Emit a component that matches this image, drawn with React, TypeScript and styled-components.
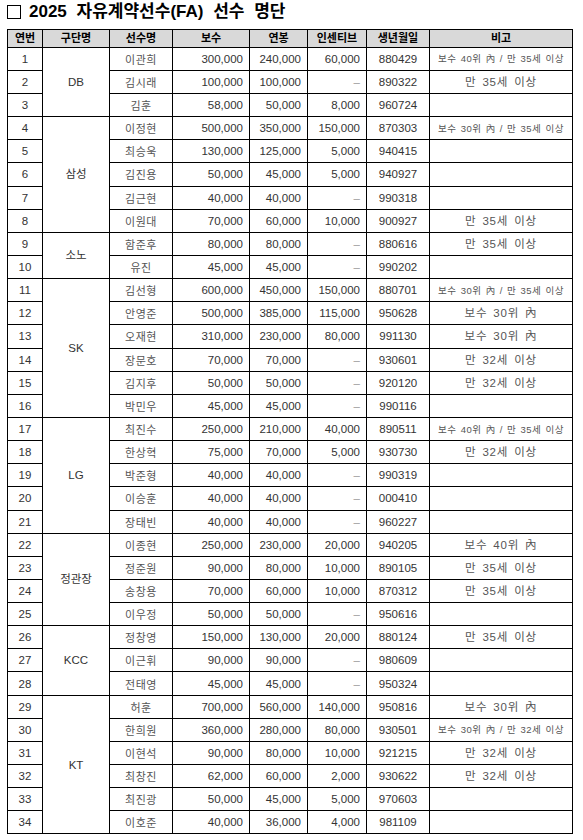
import styled, { createGlobalStyle } from 'styled-components';

const GlobalStyle = createGlobalStyle`
  body {
    margin: 0;
    background: #fff;
    font-family: 'Liberation Sans', 'Noto Sans CJK KR', sans-serif;
  }
`;

type Player = {
  no: number;
  name: string;
  pay: string;
  salary: string;
  bonus: string;
  birth: string;
  note?: string;
};

type Team = {
  team: string;
  players: Player[];
};

const p = (
  no: number,
  name: string,
  pay: string,
  salary: string,
  bonus: string,
  birth: string,
  note?: string
): Player => ({ no, name, pay, salary, bonus, birth, note });

const teams: Team[] = [
  {
    team: 'DB',
    players: [
      p(1, '이관희', '300,000', '240,000', '60,000', '880429', '보수 40위 內 / 만 35세 이상'),
      p(2, '김시래', '100,000', '100,000', '-', '890322', '만 35세 이상'),
      p(3, '김훈', '58,000', '50,000', '8,000', '960724')
    ]
  },
  {
    team: '삼성',
    players: [
      p(4, '이정현', '500,000', '350,000', '150,000', '870303', '보수 30위 內 / 만 35세 이상'),
      p(5, '최승욱', '130,000', '125,000', '5,000', '940415'),
      p(6, '김진용', '50,000', '45,000', '5,000', '940927'),
      p(7, '김근현', '40,000', '40,000', '-', '990318'),
      p(8, '이원대', '70,000', '60,000', '10,000', '900927', '만 35세 이상')
    ]
  },
  {
    team: '소노',
    players: [
      p(9, '함준후', '80,000', '80,000', '-', '880616', '만 35세 이상'),
      p(10, '유진', '45,000', '45,000', '-', '990202')
    ]
  },
  {
    team: 'SK',
    players: [
      p(11, '김선형', '600,000', '450,000', '150,000', '880701', '보수 30위 內 / 만 35세 이상'),
      p(12, '안영준', '500,000', '385,000', '115,000', '950628', '보수 30위 內'),
      p(13, '오재현', '310,000', '230,000', '80,000', '991130', '보수 30위 內'),
      p(14, '장문호', '70,000', '70,000', '-', '930601', '만 32세 이상'),
      p(15, '김지후', '50,000', '50,000', '-', '920120', '만 32세 이상'),
      p(16, '박민우', '45,000', '45,000', '-', '990116')
    ]
  },
  {
    team: 'LG',
    players: [
      p(17, '최진수', '250,000', '210,000', '40,000', '890511', '보수 40위 內 / 만 35세 이상'),
      p(18, '한상혁', '75,000', '70,000', '5,000', '930730', '만 32세 이상'),
      p(19, '박준형', '40,000', '40,000', '-', '990319'),
      p(20, '이승훈', '40,000', '40,000', '-', '000410'),
      p(21, '장태빈', '40,000', '40,000', '-', '960227')
    ]
  },
  {
    team: '정관장',
    players: [
      p(22, '이종현', '250,000', '230,000', '20,000', '940205', '보수 40위 內'),
      p(23, '정준원', '90,000', '80,000', '10,000', '890105', '만 35세 이상'),
      p(24, '송창용', '70,000', '60,000', '10,000', '870312', '만 35세 이상'),
      p(25, '이우정', '50,000', '50,000', '-', '950616')
    ]
  },
  {
    team: 'KCC',
    players: [
      p(26, '정창영', '150,000', '130,000', '20,000', '880124', '만 35세 이상'),
      p(27, '이근휘', '90,000', '90,000', '-', '980609'),
      p(28, '전태영', '45,000', '45,000', '-', '950324')
    ]
  },
  {
    team: 'KT',
    players: [
      p(29, '허훈', '700,000', '560,000', '140,000', '950816', '보수 30위 內'),
      p(30, '한희원', '360,000', '280,000', '80,000', '930501', '보수 30위 內 / 만 32세 이상'),
      p(31, '이현석', '90,000', '80,000', '10,000', '921215', '만 32세 이상'),
      p(32, '최창진', '62,000', '60,000', '2,000', '930622', '만 32세 이상'),
      p(33, '최진광', '50,000', '45,000', '5,000', '970603'),
      p(34, '이호준', '40,000', '36,000', '4,000', '981109')
    ]
  }
];

const columns = [
  { label: '연번', width: 35 },
  { label: '구단명', width: 67 },
  { label: '선수명', width: 63 },
  { label: '보수', width: 77 },
  { label: '연봉', width: 58 },
  { label: '인센티브', width: 59 },
  { label: '생년월일', width: 63 },
  { label: '비고', width: 143 }
];

const Page = styled.div`
  padding: 0 11px 0 7px;
`;

const Title = styled.h1`
  margin: 0;
  height: 29px;
  display: flex;
  align-items: flex-start;
  gap: 8px;
  padding-top: 1px;
  box-sizing: border-box;
  font-size: 17px;
  line-height: 22px;
  font-weight: 700;
  color: #000;
  word-spacing: 5px;
`;

const Box = styled.span`
  display: inline-block;
  width: 14px;
  height: 14px;
  border: 1.5px solid #000;
  margin-top: 4px;
  box-sizing: border-box;
`;

const Table = styled.table`
  width: 565px;
  border-collapse: collapse;
  table-layout: fixed;
  border: 1.5px solid #000;
`;

const HeadCell = styled.th`
  height: 16.7px;
  padding: 0;
  background: #d9d9d9;
  border: 1px solid #000;
  font-size: 11px;
  font-weight: 700;
  color: #000;
  text-align: center;
  line-height: 14px;
`;

const Row = styled.tr`
  height: 23.15px;
`;

const Cell = styled.td<{ $align?: 'left' | 'center' | 'right' }>`
  padding: 0 6px;
  border: 1px solid #000;
  text-align: ${props => props.$align ?? 'center'};
  font-size: 11.5px;
  color: #333;
  white-space: nowrap;
  line-height: 14px;
`;

const NameCell = styled(Cell)`
  font-family: 'Noto Sans CJK KR', sans-serif;
  font-size: 11px;
  color: #555;
  letter-spacing: 0.5px;
`;

const Dash = styled.span`
  color: #999;
`;

const Note = styled.span<{ $small?: boolean }>`
  font-size: ${props => (props.$small ? '9.5px' : '11.5px')};
  letter-spacing: ${props => (props.$small ? '0.5px' : '0.8px')};
  word-spacing: ${props => (props.$small ? '1px' : '2px')};
  color: #555;
`;

const App = () => {
  return (
    <Page>
      <GlobalStyle />
      <Title>
        <Box />
        <span>2025 자유계약선수(FA) 선수 명단</span>
      </Title>
      <Table>
        <colgroup>
          {columns.map(c => (
            <col key={c.label} style={{ width: c.width }} />
          ))}
        </colgroup>
        <thead>
          <tr>
            {columns.map(c => (
              <HeadCell key={c.label}>{c.label}</HeadCell>
            ))}
          </tr>
        </thead>
        <tbody>
          {teams.map(t =>
            t.players.map((pl, i) => (
              <Row key={pl.no}>
                <Cell>{pl.no}</Cell>
                {i === 0 && <Cell rowSpan={t.players.length}>{t.team}</Cell>}
                <NameCell>{pl.name}</NameCell>
                <Cell $align="right">{pl.pay}</Cell>
                <Cell $align="right">{pl.salary}</Cell>
                <Cell $align="right">
                  {pl.bonus === '-' ? <Dash>–</Dash> : pl.bonus}
                </Cell>
                <Cell>{pl.birth}</Cell>
                <Cell>
                  {pl.note && (
                    <Note $small={pl.note.includes('/')}>{pl.note}</Note>
                  )}
                </Cell>
              </Row>
            ))
          )}
        </tbody>
      </Table>
    </Page>
  );
};

export default App;
